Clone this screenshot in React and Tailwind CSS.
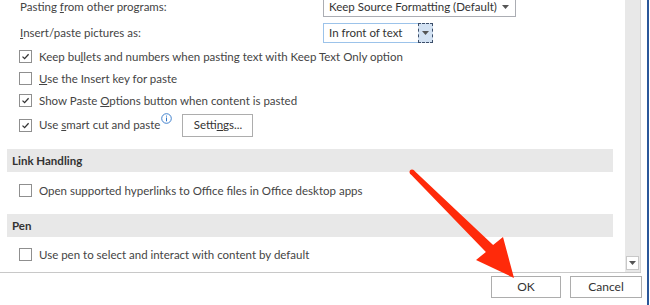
import React from 'react';

const font = { fontFamily: 'Lato, "Noto Sans", sans-serif' };

const Check = ({ checked }) => (
  <span className="w-[13px] h-[13px] border border-[#8f8f8f] bg-white flex items-center justify-center shrink-0">
    {checked && (
      <svg width="9" height="9" viewBox="0 0 9 9">
        <path d="M1.5 4.6 L3.6 6.6 L7.6 2.2" fill="none" stroke="#333" strokeWidth="1.3" />
      </svg>
    )}
  </span>
);

const CheckRow = ({ checked, children, className = '' }) => (
  <div className={`flex items-center pl-[19px] ${className}`}>
    <Check checked={checked} />
    <span className="ml-[7px] text-[11.5px] text-[#444] whitespace-nowrap">{children}</span>
  </div>
);

const Header = ({ children }) => (
  <div className="ml-[7px] w-[606px] h-[23px] bg-[#e8e8e8] flex items-center pl-[5px] text-[11.5px] font-bold text-[#333]">
    {children}
  </div>
);

const Caret = () => (
  <svg width="7" height="4" viewBox="0 0 7 4">
    <path d="M0 0 H7 L3.5 4 Z" fill="#555" />
  </svg>
);

export default function App() {
  return (
    <div className="relative w-[650px] h-[305px] overflow-hidden bg-white flex" style={font}>
      {/* dialog body */}
      <div className="w-[641px] flex flex-col">
        <div className="h-[273px] flex border-b border-[#c8c8c8]">
          <div className="w-[625px] flex flex-col">
            {/* dropdown rows */}
            <div className="mt-[-3px] h-[20px] flex items-center">
              <span className="w-[323px] shrink-0 pl-[20px] text-[11.5px] text-[#444] whitespace-nowrap">
                Pasting <u>f</u>rom other programs:
              </span>
              <div className="w-[193px] h-[20px] border border-[#abadb3] flex items-center justify-between pl-[5px] pr-[6px] text-[11.5px] text-[#333] whitespace-nowrap">
                <span>Keep Source Formatting (Default)</span>
                <Caret />
              </div>
            </div>
            <div className="mt-[6px] h-[20px] flex items-center">
              <span className="w-[323px] shrink-0 pl-[20px] text-[11.5px] text-[#444] whitespace-nowrap">
                <u>I</u>nsert/paste pictures as:
              </span>
              <div className="w-[110px] h-[20px] border border-[#9cc3ea] flex items-center text-[11.5px] text-[#333] whitespace-nowrap">
                <span className="flex-1 pl-[5px]">In front of text</span>
                <span className="w-[15px] h-[20px] -mr-px -my-px border border-dashed border-[#3c4f6b] bg-[#d3e2f3] flex items-center justify-center">
                  <Caret />
                </span>
              </div>
            </div>

            <CheckRow checked className="mt-[3px] h-[22px]">
              Keep bu<u>l</u>lets and numbers when pasting text with Keep Text Only option
            </CheckRow>
            <CheckRow className="h-[22px]">
              <u>U</u>se the Insert key for paste
            </CheckRow>
            <CheckRow checked className="h-[22px]">
              Show Paste <u>O</u>ptions button when content is pasted
            </CheckRow>
            <div className="mt-[1px] h-[25px] flex items-center pl-[19px]">
              <Check checked />
              <span className="ml-[7px] text-[11.5px] text-[#444] flex items-start whitespace-nowrap">
                Use <u className="ml-[3px]">s</u>mart cut and paste
                <svg width="11" height="11" viewBox="0 0 11 11" className="ml-[1px] -mt-[3px]">
                  <circle cx="5.5" cy="5.5" r="4.8" fill="none" stroke="#2e75c8" strokeWidth="0.9" />
                  <rect x="5" y="4.5" width="1" height="3.8" fill="#2e75c8" />
                  <rect x="5" y="2.6" width="1" height="1" fill="#2e75c8" />
                </svg>
              </span>
              <div className="ml-[10px] w-[71px] h-[23px] border border-[#adadad] flex items-center justify-center text-[11.5px] text-[#333]">
                Setti<u>n</u>gs...
              </div>
            </div>

            <div className="mt-[12px]">
              <Header>Link Handling</Header>
            </div>
            <CheckRow className="h-[36px]">
              Open supported hyperlinks to Office files in Office desktop apps
            </CheckRow>
            <div className="mt-[6px]">
              <Header>Pen</Header>
            </div>
            <CheckRow className="h-[35px]">
              Use pen to select and interact with content by default
            </CheckRow>
          </div>

          {/* scrollbar */}
          <div className="w-[16px] bg-[#e8e8e8] border-r border-[#d4d4d4] flex flex-col justify-end">
            <div className="h-[14px] mb-[2px] mx-[1px] bg-white border border-[#c8c8c8] flex items-center justify-center">
              <Caret />
            </div>
          </div>
        </div>

        {/* footer buttons */}
        <div className="flex justify-end gap-[9px] pt-[3px]">
          <div className="w-[70px] h-[22px] border border-[#adadad] bg-white flex items-center justify-center text-[12px] text-[#333]">
            OK
          </div>
          <div className="w-[72px] h-[22px] border border-[#adadad] bg-white flex items-center justify-center text-[12px] text-[#333] -mr-[1px]">
            Cancel
          </div>
        </div>
      </div>

      {/* window edge */}
      <div className="w-[6px]" />
      <div className="w-[2px] bg-[#2b579a]" />

      {/* red arrow */}
      <svg className="absolute left-0 top-0 pointer-events-none" width="650" height="305" viewBox="0 0 650 305">
        <polygon
          points="413.8,170.3 493.1,245 503,237 514,278 476,260 485.9,252 410.2,173.7"
          fill="#ff2a0a"
        />
        <circle cx="412" cy="172" r="2.5" fill="#ff2a0a" />
      </svg>
    </div>
  );
}
